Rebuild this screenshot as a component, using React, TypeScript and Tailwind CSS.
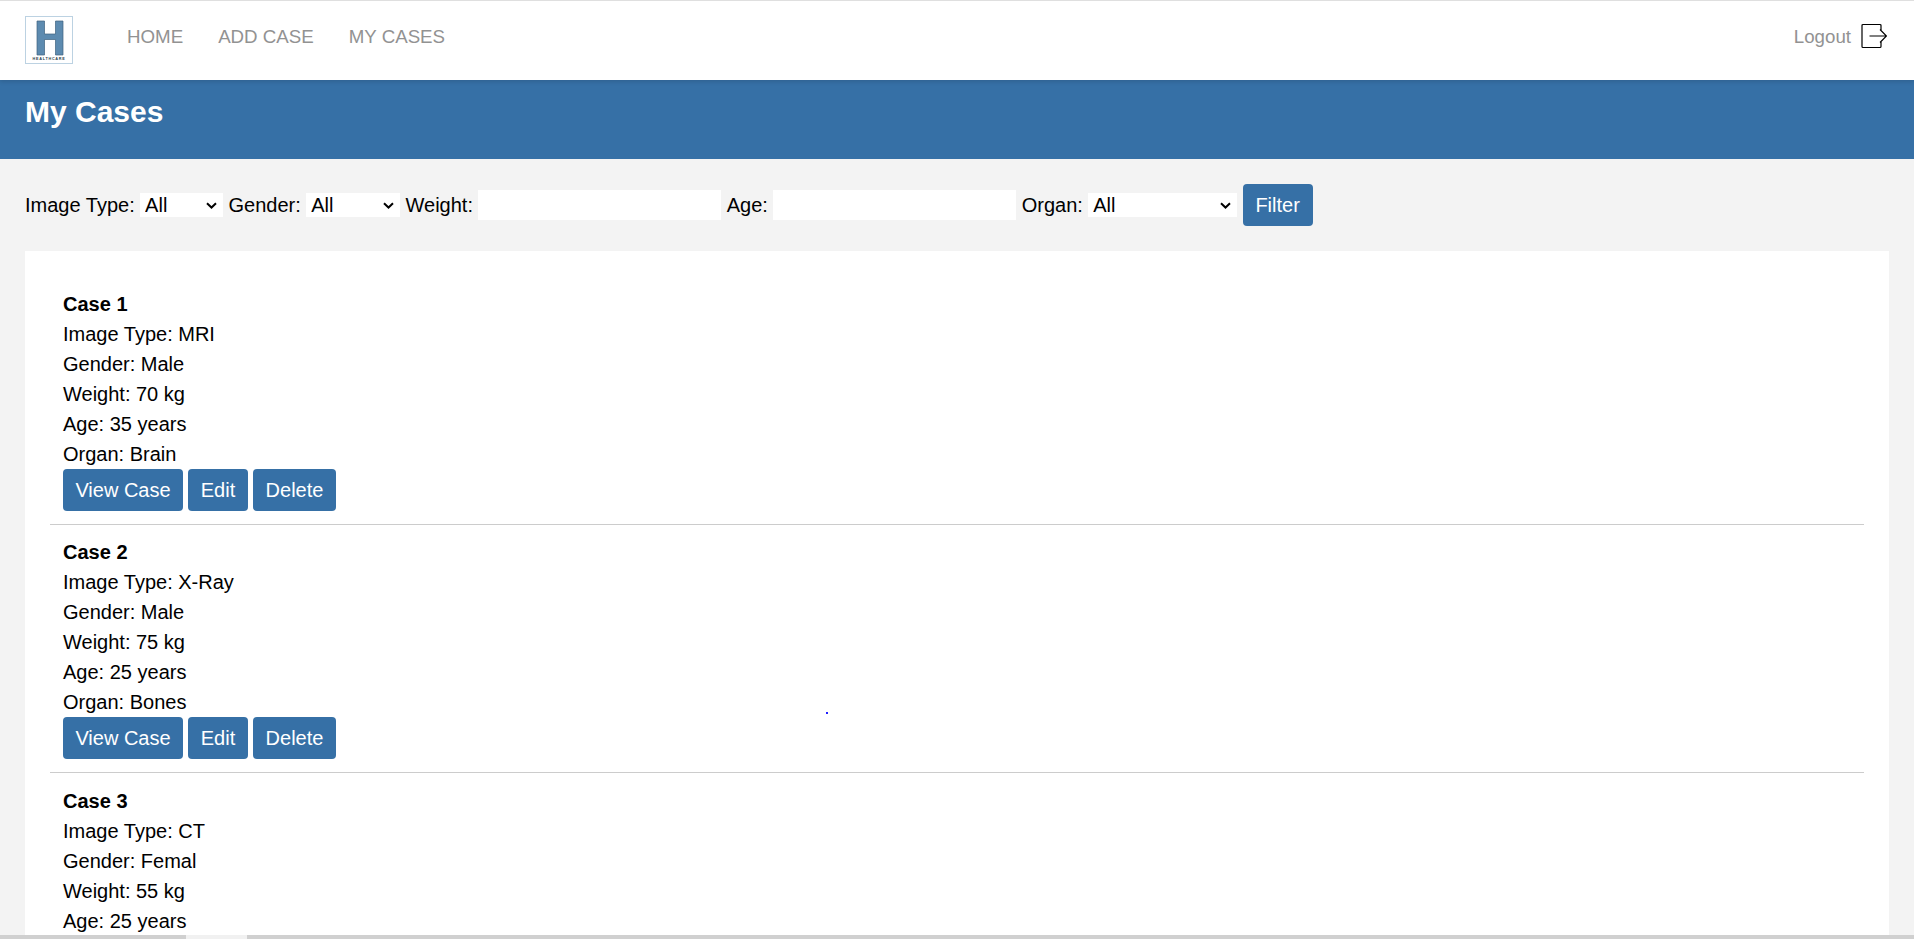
import React from 'react'

// case 3 runs off the bottom of the window, so only its visible rows are listed
const cases = [
  { id: 1, imageType: 'MRI', gender: 'Male', weight: 70, age: 35, organ: 'Brain' },
  { id: 2, imageType: 'X-Ray', gender: 'Male', weight: 75, age: 25, organ: 'Bones' },
  { id: 3, imageType: 'CT', gender: 'Femal', weight: 55, age: 25 },
]

function Logo() {
  return (
    <svg width="48" height="48" viewBox="0 0 48 48" className="block">
      <rect x="0.5" y="0.5" width="47" height="47" fill="#fff" stroke="#bcd2e2" />
      <path d="M12 5h7.500v13h11V5H38v34h-7.500V23.500h-11V39H12z" fill="#5d8bb0" stroke="#3f6280" strokeWidth="0.7" />
      <text x="24" y="44" textAnchor="middle" fontSize="3.800" fontWeight="700" letterSpacing="0.700" fill="#2f3f4e">
        HEALTHCARE
      </text>
    </svg>
  )
}

function LogoutIcon() {
  return (
    <svg width="26" height="26" viewBox="0 0 26 26" fill="none" stroke="#000" strokeWidth="1.200" className="block">
      <path d="M20 7V2.500a1 1 0 0 0-1-1H2a1 1 0 0 0-1 1v21a1 1 0 0 0 1 1h17a1 1 0 0 0 1-1V19" />
      <path d="M8.500 13h17M19 6.500l6.500 6.500-6.500 6.500" />
    </svg>
  )
}

function Btn({ children, className = '' }: { children: React.ReactNode; className?: string }) {
  return (
    <button className={`h-[42px] rounded-[4px] bg-[#3670a6] text-[20px] text-white ${className}`}>
      {children}
    </button>
  )
}

function Select({ className }: { className: string }) {
  return (
    <div className={`relative h-6 overflow-hidden bg-white ${className}`}>
      <select className="-mt-[3px] block h-[26px] w-full appearance-none pl-[5px]">
        <option>All</option>
      </select>
      <svg
        width="11"
        height="7"
        viewBox="0 0 11 7"
        fill="none"
        stroke="#000"
        strokeWidth="2"
        className="pointer-events-none absolute right-[6px] top-[9px]"
      >
        <path d="M1 1.200l4.500 4.300 4.500-4.300" />
      </svg>
    </div>
  )
}

export default function App() {
  return (
    <div
      className="relative h-[939px] overflow-hidden bg-[#f3f3f3] text-[20px] text-black"
      style={{ fontFamily: '"Liberation Sans", Arial, sans-serif' }}
    >
      <header className="relative z-10 flex h-20 items-center justify-between border-t border-[#dfdfdf] bg-white pl-[25px] pr-[27px] shadow-[0_2px_4px_rgba(0,0,0,0.12)]">
        <div className="flex items-center">
          <div className="mb-[1px]">
            <Logo />
          </div>
          <nav className="ml-[54px] flex -translate-y-[3px] gap-[35px] text-[18.72px] text-[#929292]">
            <a>HOME</a>
            <a>ADD CASE</a>
            <a>MY CASES</a>
          </nav>
        </div>
        <div className="flex items-center gap-[10px] text-[18.72px] text-[#929292]">
          <span className="-translate-y-[3px]">Logout</span>
          <div className="-translate-y-[4px]">
            <LogoutIcon />
          </div>
        </div>
      </header>

      <div className="h-[79px] bg-[#3670a6] px-[25px] pt-[15px]">
        <h1 className="text-[30px] font-bold leading-[34px] text-white">My Cases</h1>
      </div>

      <div className="flex h-[92px] items-center gap-[5.4px] whitespace-nowrap px-[25px]">
        <label>Image Type:</label>
        <Select className="w-[83px]" />
        <label>Gender:</label>
        <Select className="w-[94px]" />
        <label>Weight:</label>
        <input className="h-[30px] w-[243px] bg-white" />
        <label>Age:</label>
        <input className="h-[30px] w-[243px] bg-white" />
        <label>Organ:</label>
        <Select className="w-[149px]" />
        <Btn className="w-[70px]">Filter</Btn>
      </div>

      <main className="mx-[25px] bg-white p-[25px]">
        {cases.map((c) => (
          <div key={c.id} className="border-b border-[#cccccc] px-[13px] py-[12.8px] leading-[30px]">
            <div className="font-bold">Case {c.id}</div>
            <div>Image Type: {c.imageType}</div>
            <div>Gender: {c.gender}</div>
            <div>Weight: {c.weight} kg</div>
            <div>Age: {c.age} years</div>
            {c.organ && (
              <>
                <div>Organ: {c.organ}</div>
                <div className="flex h-[42px] gap-[5px]">
                  <Btn className="w-[120px]">View Case</Btn>
                  <Btn className="w-[60px]">Edit</Btn>
                  <Btn className="w-[83px]">Delete</Btn>
                </div>
              </>
            )}
          </div>
        ))}
      </main>

      <div className="absolute left-[826px] top-[712px] h-[2px] w-[2px] bg-[#2020ff]" />

      <div className="absolute inset-x-0 bottom-0 h-[4px] bg-[#d0d0d0]">
        <div className="absolute left-[186px] top-0 h-full w-[61px] bg-[#f1f1f1]" />
      </div>
    </div>
  )
}
